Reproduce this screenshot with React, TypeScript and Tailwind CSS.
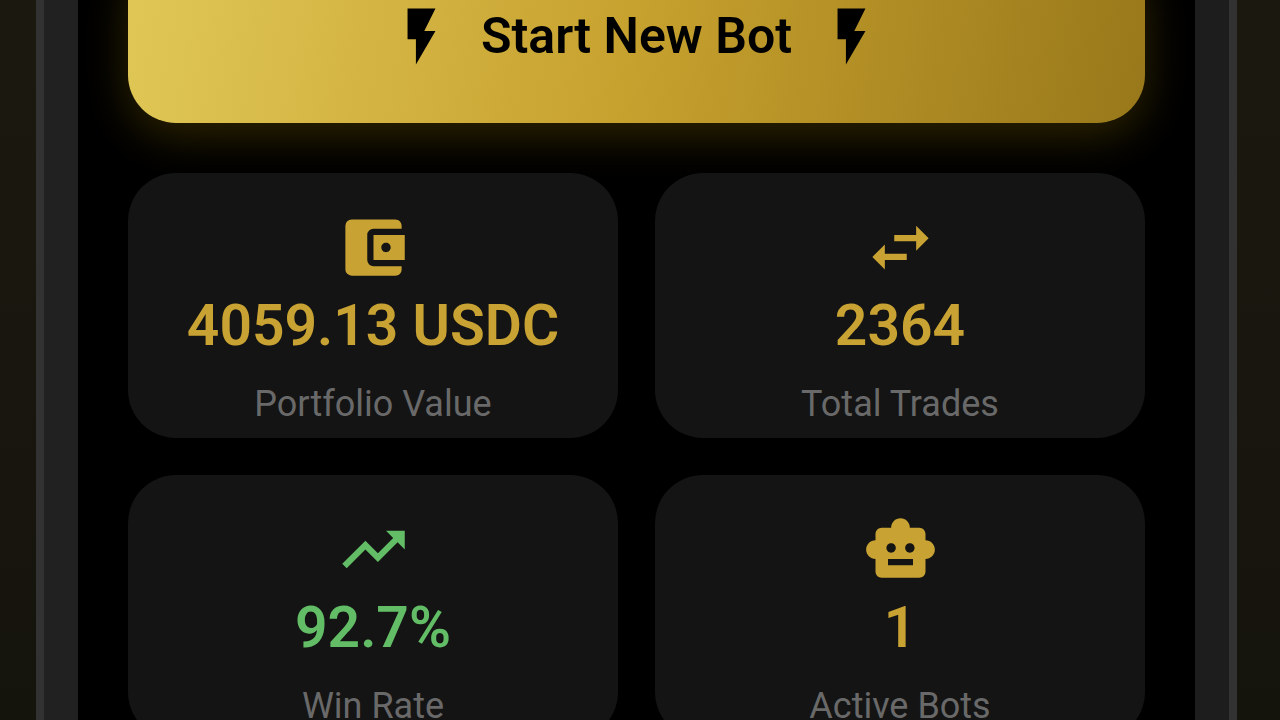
import type { IconType } from "react-icons";
import {
  MdAccountBalanceWallet,
  MdFlashOn,
  MdSmartToy,
  MdSwapHoriz,
  MdTrendingUp,
} from "react-icons/md";

type Stat = { label: string; value: string; icon: IconType; tone: string };

const stats: Stat[] = [
  { label: "Portfolio Value", value: "4059.13 USDC", icon: MdAccountBalanceWallet, tone: "text-[#c8a232]" },
  { label: "Total Trades", value: "2364", icon: MdSwapHoriz, tone: "text-[#c8a232]" },
  { label: "Win Rate", value: "92.7%", icon: MdTrendingUp, tone: "text-[#62bd66]" },
  { label: "Active Bots", value: "1", icon: MdSmartToy, tone: "text-[#c8a232]" },
];

function StatCard({ label, value, icon: Icon, tone }: Stat) {
  return (
    <article className="flex flex-col items-center rounded-[48px] bg-[#141414] pt-[37px] pb-5">
      <Icon aria-hidden="true" className={`size-[75px] ${tone}`} />
      <p className={`mt-[5px] text-[57px] leading-[72px] font-semibold ${tone}`}>{value}</p>
      <p className="mt-7 text-[36px] leading-[28px] text-[#696969]">{label}</p>
    </article>
  );
}

export default function App() {
  return (
    <div className="h-screen overflow-hidden bg-linear-to-b from-[#1b180f] to-[#15140c] pr-[43px] pl-9 font-['Roboto',sans-serif]">
      <div className="min-h-full border-x-8 border-[#323232] bg-linear-to-r from-[#212121] to-[#1d1d1d] px-[34px]">
        <main className="min-h-screen bg-black px-[50px]">
          <button
            type="button"
            className="-mt-[51px] flex h-[174px] w-full items-center justify-center gap-[26px] rounded-[48px] bg-linear-100 from-[#e0c856] via-[#c7a12e] to-[#98781a] text-[50px] font-semibold text-black shadow-[0_12px_44px_rgba(212,170,0,0.22)]"
          >
            <MdFlashOn aria-hidden="true" className="size-[67px]" />
            <span>Start New Bot</span>
            <MdFlashOn aria-hidden="true" className="size-[67px]" />
          </button>
          <section aria-label="Statistics" className="mt-[50px] grid grid-cols-2 gap-[37px]">
            {stats.map((stat) => (
              <StatCard key={stat.label} {...stat} />
            ))}
          </section>
        </main>
      </div>
    </div>
  );
}
